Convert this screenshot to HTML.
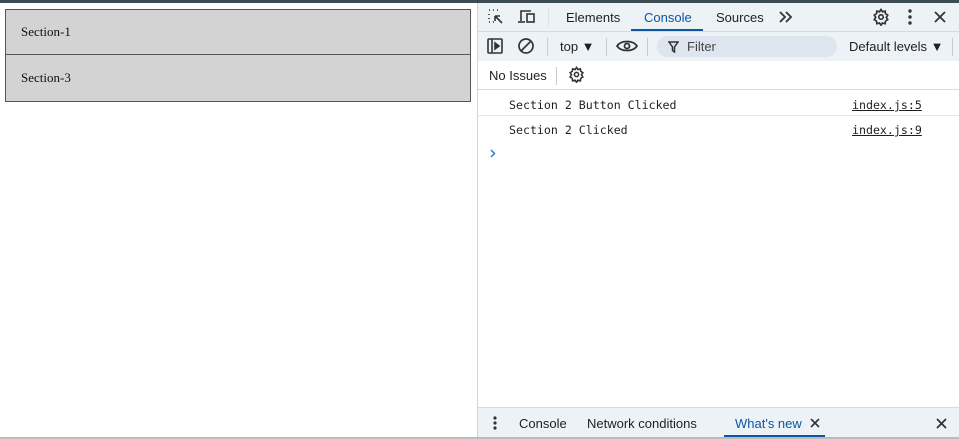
<!DOCTYPE html>
<html><head><style>
*{margin:0;padding:0;box-sizing:border-box}
body{width:959px;height:439px;overflow:hidden;background:#fff;position:relative;font-family:"Liberation Sans",sans-serif}
.abs{position:absolute}
.sec{position:absolute;left:5px;width:466px;background:#d3d3d3;border:1px solid #555;font-family:"Liberation Serif",serif;font-size:13px;color:#111;padding-left:15px}
.dt{position:absolute;left:477px;top:3px;width:482px;height:434px;border-left:1px solid #cdd4dc;background:#fff;font-size:13px;color:#1f1f1f}
.bar{position:absolute;left:0;width:482px;background:#edf2f7}
.t{position:absolute;white-space:nowrap}
.mono{font-family:"DejaVu Sans Mono","Liberation Mono",monospace;font-size:11.6px}
.vs{position:absolute;width:1px;height:18px;background:#c7ccd1}
</style></head><body>
<div class="abs" style="left:0;top:0;width:959px;height:3px;background:#3c4a52"></div>
<div class="sec" style="top:9px;height:46px;line-height:44px">Section-1</div>
<div class="sec" style="top:54px;height:48px;line-height:46px">Section-3</div>
<div class="abs" style="left:0;top:437px;width:959px;height:2px;background:#bbb"></div>
<div class="dt">
 <div class="bar" style="top:0;height:29px;border-bottom:1px solid #d5dbe1">
  <svg class="abs" style="left:9px;top:5px" width="18" height="18" viewBox="0 0 18 18" fill="none" stroke="#333" stroke-width="1.6"><path d="M2 2h1M6 2h1M10 2h1M2 6v1M2 10v1M2 14h1M6 14h1" /><path d="M8 8l7 7M8 8h5M8 8v5"/></svg>
  <svg class="abs" style="left:39px;top:5px" width="20" height="18" viewBox="0 0 20 18" fill="none" stroke="#333" stroke-width="1.6"><path d="M4 13V3h10"/><path d="M1 14h7"/><rect x="10" y="6" width="7" height="8"/></svg>
  <div class="vs" style="left:70px;top:5px;background:#dde2e7"></div>
  <span class="t" style="left:88px;top:7px">Elements</span>
  <span class="t" style="left:166px;top:7px;color:#0b57a0">Console</span>
  <div class="abs" style="left:153px;top:26px;width:72px;height:2px;background:#0b57a0"></div>
  <span class="t" style="left:238px;top:7px">Sources</span>
  <svg class="abs" style="left:301px;top:8px" width="14" height="12" fill="none" stroke="#333" stroke-width="1.8"><path d="M1 1l5 5-5 5M7 1l5 5-5 5"/></svg>
  <svg class="abs" style="left:394px;top:5px" width="18" height="18" viewBox="0 0 24 24" fill="none" stroke="#333" stroke-width="2.2"><circle cx="12" cy="12" r="3"/><path d="M12 2l2 3 3.5-1 .5 3.5 3 2-2 3 2 3-3 2-.5 3.5-3.5-1-2 3-2-3-3.5 1-.5-3.5-3-2 2-3-2-3 3-2 .5-3.5 3.5 1z"/></svg>
  <svg class="abs" style="left:430px;top:6px" width="4" height="16"><circle cx="2" cy="2" r="1.7" fill="#333"/><circle cx="2" cy="8" r="1.7" fill="#333"/><circle cx="2" cy="14" r="1.7" fill="#333"/></svg>
  <svg class="abs" style="left:456px;top:8px" width="12" height="12" stroke="#333" stroke-width="1.8"><path d="M1 1l10 10M11 1L1 11"/></svg>
 </div>
 <div class="bar" style="top:29px;height:29px">
  <svg class="abs" style="left:9px;top:6px" width="16" height="16" fill="none" stroke="#333" stroke-width="1.6"><rect x="1" y="1" width="14" height="14" rx="1"/><path d="M5 1v14"/><path d="M8 5l4 3-4 3z" fill="#333"/></svg>
  <svg class="abs" style="left:39px;top:5px" width="18" height="18" fill="none" stroke="#333" stroke-width="1.7"><circle cx="9" cy="9" r="7"/><path d="M4 14L14 4"/></svg>
  <div class="vs" style="left:69px;top:6px"></div>
  <span class="t" style="left:82px;top:7px">top &#9660;</span>
  <div class="vs" style="left:128px;top:6px"></div>
  <svg class="abs" style="left:138px;top:7px" width="22" height="14" fill="none" stroke="#333" stroke-width="1.8"><path d="M1 7C5 1 17 1 21 7 17 13 5 13 1 7z"/><circle cx="11" cy="7" r="2.5"/></svg>
  <div class="vs" style="left:169px;top:6px"></div>
  <div class="abs" style="left:179px;top:4px;width:180px;height:21px;border-radius:11px;background:#dde5ee"></div>
  <svg class="abs" style="left:190px;top:9px" width="11" height="12" fill="none" stroke="#333" stroke-width="1.5"><path d="M1 1h9L6.5 6v5l-2-1.5V6z"/></svg>
  <span class="t" style="left:209px;top:7px;color:#444">Filter</span>
  <span class="t" style="left:371px;top:7px">Default levels &#9660;</span>
  <div class="vs" style="left:474px;top:6px"></div>
 </div>
 <div class="abs" style="left:0;top:58px;width:482px;height:29px;border-bottom:1px solid #d5dbe1">
  <span class="t" style="left:11px;top:7px">No Issues</span>
  <div class="vs" style="left:78px;top:6px"></div>
  <svg class="abs" style="left:90px;top:5px" width="17" height="17" viewBox="0 0 24 24" fill="none" stroke="#333" stroke-width="2.2"><circle cx="12" cy="12" r="3"/><path d="M12 2l2 3 3.5-1 .5 3.5 3 2-2 3 2 3-3 2-.5 3.5-3.5-1-2 3-2-3-3.5 1-.5-3.5-3-2 2-3-2-3 3-2 .5-3.5 3.5 1z"/></svg>
 </div>
 <div class="abs" style="left:0;top:88px;width:482px;height:25px;border-bottom:1px solid #e3e6ea"></div>
 <span class="t mono" style="left:31px;top:95px">Section 2 Button Clicked</span>
 <span class="t mono" style="left:374px;top:95px;text-decoration:underline;color:#1f1f1f">index.js:5</span>
 <span class="t mono" style="left:31px;top:120px">Section 2 Clicked</span>
 <span class="t mono" style="left:374px;top:120px;text-decoration:underline">index.js:9</span>
 <svg class="abs" style="left:12px;top:146px" width="6" height="9" fill="none" stroke="#1a73e8" stroke-width="1.4"><path d="M1 1l3.5 3.5L1 8"/></svg>
 <div class="bar" style="top:404px;height:30px;border-top:1px solid #d5dbe1">
  <svg class="abs" style="left:15px;top:8px" width="4" height="14"><circle cx="2" cy="2" r="1.6" fill="#333"/><circle cx="2" cy="7" r="1.6" fill="#333"/><circle cx="2" cy="12" r="1.6" fill="#333"/></svg>
  <span class="t" style="left:41px;top:8px">Console</span>
  <span class="t" style="left:109px;top:8px">Network conditions</span>
  <span class="t" style="left:257px;top:8px;color:#0b57a0">What's new</span>
  <svg class="abs" style="left:332px;top:10px" width="10" height="10" stroke="#333" stroke-width="1.6"><path d="M1 1l8 8M9 1L1 9"/></svg>
  <div class="abs" style="left:246px;top:27px;width:101px;height:2px;background:#0b57a0"></div>
  <svg class="abs" style="left:458px;top:10px" width="11" height="11" stroke="#333" stroke-width="1.8"><path d="M1 1l9 9M10 1L1 10"/></svg>
 </div>
</div>
</body></html>
